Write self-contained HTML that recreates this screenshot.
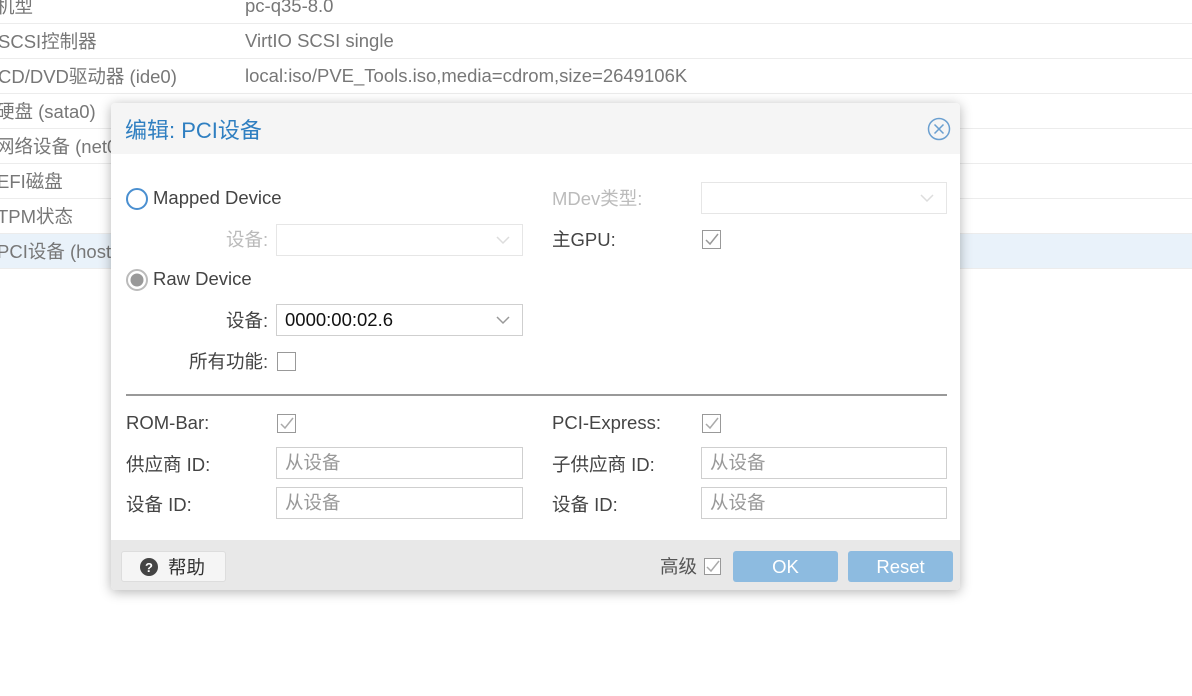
<!DOCTYPE html>
<html><head><meta charset="utf-8"><style>
*{box-sizing:border-box;margin:0;padding:0}
body{width:1192px;height:696px;background:#fff;position:relative;overflow:hidden;font-family:"Liberation Sans","Noto Sans CJK SC",sans-serif;font-size:18.5px;color:#444}
.a{position:absolute;white-space:nowrap}
.row{position:absolute;left:0;width:1192px;height:35px;border-bottom:1px solid #ececec;color:#777}
.row span{position:absolute;top:50%;transform:translateY(-50%)}
.dlg{position:absolute;left:111px;top:103px;width:849px;height:487px;background:#fff;border-radius:4px;box-shadow:0 2px 12px rgba(0,0,0,.3);overflow:hidden}
.lbl{position:absolute;transform:translateY(-50%);white-space:nowrap}
.in{position:absolute;border:1px solid #cfcfcf;background:#fff;height:32px;padding-left:8px;line-height:30px;font-size:18.5px}
.cb{position:absolute;width:19px;height:19px;border:1.5px solid #999;background:#fff}
.chev{position:absolute;right:12px;top:10px}
.btn{position:absolute;top:448px;height:31px;border-radius:3px;text-align:center;line-height:31px;font-size:18.5px}
</style></head><body>
<div class="row" style="top:-11px"><span style="left:-4px">机型</span><span style="left:245px">pc-q35-8.0</span></div>
<div class="row" style="top:24px"><span style="left:-2px">SCSI控制器</span><span style="left:245px">VirtIO SCSI single</span></div>
<div class="row" style="top:59px"><span style="left:-2px">CD/DVD驱动器 (ide0)</span><span style="left:245px">local:iso/PVE_Tools.iso,media=cdrom,size=2649106K</span></div>
<div class="row" style="top:94px"><span style="left:-4px">硬盘 (sata0)</span></div>
<div class="row" style="top:129px"><span style="left:-4px">网络设备 (net0)</span></div>
<div class="row" style="top:164px"><span style="left:-3px">EFI磁盘</span></div>
<div class="row" style="top:199px"><span style="left:-3px">TPM状态</span></div>
<div class="row" style="top:234px;background:#e9f2fa"><span style="left:-3px">PCI设备 (hostpci0)</span></div>

<div class="dlg">
 <div style="position:absolute;left:0;top:0;width:100%;height:51px;background:#f5f5f5"></div>
 <div class="lbl" style="left:14px;top:26px;font-size:22px;color:#2f7fc1">编辑: PCI设备</div>
 <svg class="a" style="left:816px;top:14px" width="24" height="24"><circle cx="12" cy="12" r="10.5" fill="none" stroke="#6a9fd0" stroke-width="1.5"/><path d="M7.5 7.5L16.5 16.5M16.5 7.5L7.5 16.5" stroke="#6a9fd0" stroke-width="1.5"/></svg>

 <svg class="a" style="left:14px;top:84px" width="24" height="24"><circle cx="12" cy="12" r="10" fill="#fff" stroke="#4a8fd0" stroke-width="2"/></svg>
 <div class="lbl" style="left:42px;top:95px">Mapped Device</div>
 <div class="lbl" style="left:115px;top:136px;color:#bbb">设备:</div>
 <div class="in" style="left:165px;top:121px;width:247px;border-color:#e6e6e6"><svg class="chev" width="14" height="10"><path d="M1 2l6 6 6-6" fill="none" stroke="#ddd" stroke-width="1.5"/></svg></div>
 <svg class="a" style="left:14px;top:165px" width="24" height="24"><circle cx="12" cy="12" r="10" fill="#fff" stroke="#bbb" stroke-width="2"/><circle cx="12" cy="12" r="6.5" fill="#999"/></svg>
 <div class="lbl" style="left:42px;top:176px">Raw Device</div>
 <div class="lbl" style="left:115px;top:217px">设备:</div>
 <div class="in" style="left:165px;top:201px;width:247px;color:#111"><span>0000:00:02.6</span><svg class="chev" width="14" height="10"><path d="M1 2l6 6 6-6" fill="none" stroke="#999" stroke-width="1.5"/></svg></div>
 <div class="lbl" style="left:78px;top:258px">所有功能:</div>
 <div class="cb" style="left:166px;top:249px"></div>

 <div class="lbl" style="left:441px;top:95px;color:#bbb">MDev类型:</div>
 <div class="in" style="left:590px;top:79px;width:246px;border-color:#e6e6e6"><svg class="chev" width="14" height="10"><path d="M1 2l6 6 6-6" fill="none" stroke="#ddd" stroke-width="1.5"/></svg></div>
 <div class="lbl" style="left:441px;top:136px">主GPU:</div>
 <div class="cb" style="left:591px;top:127px"><svg style="position:absolute;left:1px;top:1px" width="15" height="15"><path d="M2 8l4 4 8-10" fill="none" stroke="#999" stroke-width="1.5"/></svg></div>

 <div class="a" style="left:15px;top:291px;width:821px;height:2px;background:#999"></div>

 <div class="lbl" style="left:15px;top:320px">ROM-Bar:</div>
 <div class="cb" style="left:166px;top:311px"><svg style="position:absolute;left:1px;top:1px" width="15" height="15"><path d="M2 8l4 4 8-10" fill="none" stroke="#aaa" stroke-width="1.5"/></svg></div>
 <div class="lbl" style="left:441px;top:320px">PCI-Express:</div>
 <div class="cb" style="left:591px;top:311px"><svg style="position:absolute;left:1px;top:1px" width="15" height="15"><path d="M2 8l4 4 8-10" fill="none" stroke="#aaa" stroke-width="1.5"/></svg></div>

 <div class="lbl" style="left:15px;top:361px">供应商 ID:</div>
 <div class="in" style="left:165px;top:344px;width:247px;color:#999">从设备</div>
 <div class="lbl" style="left:441px;top:361px">子供应商 ID:</div>
 <div class="in" style="left:590px;top:344px;width:246px;color:#999">从设备</div>
 <div class="lbl" style="left:15px;top:401px">设备 ID:</div>
 <div class="in" style="left:165px;top:384px;width:247px;color:#999">从设备</div>
 <div class="lbl" style="left:441px;top:401px">设备 ID:</div>
 <div class="in" style="left:590px;top:384px;width:246px;color:#999">从设备</div>

 <div style="position:absolute;left:0;top:437px;width:100%;height:50px;background:#e8e8e8"></div>
 <div class="btn" style="left:10px;width:105px;background:#f5f5f5;border:1px solid #ddd;color:#333;text-align:left;padding-left:46px">帮助</div>
 <svg class="a" style="left:29px;top:455px" width="18" height="18"><circle cx="9" cy="9" r="9" fill="#444"/><text x="9" y="14" font-size="13" font-weight="bold" fill="#fff" text-anchor="middle" font-family="Liberation Sans">?</text></svg>
 <div class="lbl" style="left:549px;top:463px;color:#555">高级</div>
 <div class="cb" style="left:593px;top:455px;width:17px;height:17px"><svg style="position:absolute;left:0;top:0" width="15" height="15"><path d="M2 8l4 4 8-10" fill="none" stroke="#aaa" stroke-width="1.5"/></svg></div>
 <div class="btn" style="left:622px;width:105px;background:#8dbbe0;color:#fff">OK</div>
 <div class="btn" style="left:737px;width:105px;background:#8dbbe0;color:#fff">Reset</div>
</div>
</body></html>
